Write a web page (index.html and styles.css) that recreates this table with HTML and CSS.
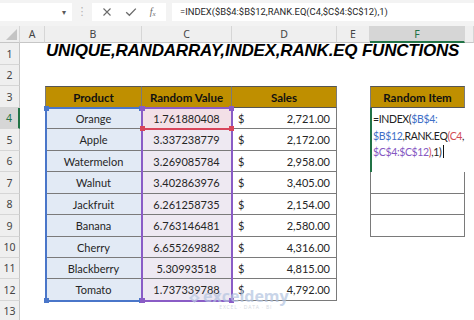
FILE: index.html
```html
<!DOCTYPE html>
<html>
<head>
<meta charset="utf-8">
<link rel="stylesheet" href="styles.css">
</head>
<body>
<div class="app">
  <div class="fbar">
    <div class="namebox"><span class="caret">▾</span></div>
    <div class="grip">⋮</div>
    <div class="fbtns">
      <svg class="ico" viewBox="0 0 10 10" width="10" height="10"><path d="M1.5 1.5 L8.5 8.5 M8.5 1.5 L1.5 8.5" stroke="#6b6b6b" stroke-width="1.1" fill="none"/></svg>
      <svg class="ico" viewBox="0 0 12 10" width="12" height="10"><path d="M1.2 5.2 L4.4 8.3 L10.8 1.6" stroke="#6b6b6b" stroke-width="1.3" fill="none"/></svg>
      <span class="fx">f<sub>x</sub></span>
    </div>
    <div class="finput">=INDEX($B$4:$B$12,RANK.EQ(C4,$C$4:$C$12),1)</div>
  </div>

  <div class="sheet">
    <!-- column headers -->
    <div class="corner"><span class="tri"></span></div>
    <div class="ch">A</div>
    <div class="ch">B</div>
    <div class="ch">C</div>
    <div class="ch">D</div>
    <div class="ch">E</div>
    <div class="ch sel">F</div>
    <div class="ch"></div>

    <!-- row 1 -->
    <div class="rh">1</div>
    <div class="c"></div>
    <div class="title">UNIQUE,RANDARRAY,INDEX,RANK.EQ FUNCTIONS</div>
    <div class="c"></div>

    <!-- row 2 -->
    <div class="rh">2</div>
    <div class="c"></div><div class="c"></div><div class="c"></div><div class="c"></div><div class="c"></div><div class="c"></div><div class="c"></div>

    <!-- row 3 -->
    <div class="rh">3</div>
    <div class="c"></div>
    <div class="t th first">Product</div>
    <div class="t th">Random Value</div>
    <div class="t th">Sales</div>
    <div class="c"></div>
    <div class="t th first">Random Item</div>
    <div class="c"></div>

    <!-- row 4 -->
    <div class="rh sel">4</div>
    <div class="c"></div>
    <div class="t first prod">Orange</div>
    <div class="t rv pink">1.761880408</div>
    <div class="t sales"><span>$</span><span>2,721.00</span></div>
    <div class="c"></div>
    <div class="edit">=INDEX(<span class="cb">$B$4:</span><br><span class="cb">$B$12</span>,RANK.EQ<span class="cr">(C4</span>,<br><span class="cp">$C$4:$C$12</span><span class="cr">)</span>,1)<span class="caretbar"></span></div>
    <div class="c"></div>

    <!-- row 5 -->
    <div class="rh">5</div>
    <div class="c"></div>
    <div class="t first prod">Apple</div>
    <div class="t rv">3.337238779</div>
    <div class="t sales"><span>$</span><span>2,172.00</span></div>
    <div class="c"></div>
    <div class="c"></div>

    <!-- row 6 -->
    <div class="rh">6</div>
    <div class="c"></div>
    <div class="t first prod">Watermelon</div>
    <div class="t rv">3.269085784</div>
    <div class="t sales"><span>$</span><span>2,958.00</span></div>
    <div class="c"></div>
    <div class="c"></div>

    <!-- row 7 -->
    <div class="rh">7</div>
    <div class="c"></div>
    <div class="t first prod">Walnut</div>
    <div class="t rv">3.402863976</div>
    <div class="t sales"><span>$</span><span>3,405.00</span></div>
    <div class="c"></div>
    <div class="t first"></div>
    <div class="c"></div>

    <!-- row 8 -->
    <div class="rh">8</div>
    <div class="c"></div>
    <div class="t first prod">Jackfruit</div>
    <div class="t rv">6.261258735</div>
    <div class="t sales"><span>$</span><span>2,154.00</span></div>
    <div class="c"></div>
    <div class="t first"></div>
    <div class="c"></div>

    <!-- row 9 -->
    <div class="rh">9</div>
    <div class="c"></div>
    <div class="t first prod">Banana</div>
    <div class="t rv">6.763146481</div>
    <div class="t sales"><span>$</span><span>2,580.00</span></div>
    <div class="c"></div>
    <div class="t first"></div>
    <div class="c"></div>

    <!-- row 10 -->
    <div class="rh">10</div>
    <div class="c"></div>
    <div class="t first prod">Cherry</div>
    <div class="t rv">6.655269882</div>
    <div class="t sales"><span>$</span><span>4,316.00</span></div>
    <div class="c"></div><div class="c"></div><div class="c"></div>

    <!-- row 11 -->
    <div class="rh">11</div>
    <div class="c"></div>
    <div class="t first prod">Blackberry</div>
    <div class="t rv">5.30993518</div>
    <div class="t sales"><span>$</span><span>4,815.00</span></div>
    <div class="c"></div><div class="c"></div><div class="c"></div>

    <!-- row 12 -->
    <div class="rh">12</div>
    <div class="c"></div>
    <div class="t first prod">Tomato</div>
    <div class="t rv">1.737339788</div>
    <div class="t sales"><span>$</span><span>4,792.00</span></div>
    <div class="c"></div><div class="c"></div><div class="c"></div>

    <!-- row 13 -->
    <div class="rh">13</div>
    <div class="c"></div><div class="c"></div><div class="c"></div><div class="c"></div><div class="c"></div><div class="c"></div><div class="c"></div>

    <!-- reference range highlights (overlays on grid areas) -->
    <div class="range rng-blue"><i class="hd tl"></i><i class="hd tr"></i><i class="hd bl"></i><i class="hd br"></i></div>
    <div class="range rng-purple"><i class="hd tl"></i><i class="hd tr"></i><i class="hd bl"></i><i class="hd br"></i></div>
    <div class="range rng-red"><i class="hd bl"></i><i class="hd br"></i></div>
  </div>

  <div class="watermark">
    <svg width="13" height="12" viewBox="0 0 13 12"><path d="M1 6 L6.5 1 L12 6 L6.5 11 Z" fill="#b9c9e3"/><path d="M4 6 L6.5 3.7 L9 6 L6.5 8.3 Z" fill="#e7eef8"/></svg>
    <div class="wm-text">
      <span class="wm-name">exceldemy</span>
      <span class="wm-sub">EXCEL · DATA · BI</span>
    </div>
  </div>
</div>
</body>
</html>
```

FILE: styles.css
```css
* { box-sizing: border-box; margin: 0; padding: 0; }
html, body { width: 474px; height: 320px; overflow: hidden; background: #fff; }
body { font-family: Lato, "Liberation Sans", sans-serif; color: #1f1f1f; }

.app { position: relative; width: 474px; height: 320px; overflow: hidden; background: #fff; }

/* formula bar */
.fbar { height: 26px; background: #f3f3f3; display: flex; align-items: flex-start; padding-top: 3px; }
.namebox { width: 72px; height: 18px; background: #fff; display: flex; justify-content: flex-end; align-items: center; padding-right: 6px; }
.caret { font-size: 8px; color: #5a5a5a; line-height: 1; }
.grip { width: 20px; height: 18px; text-align: center; color: #b0b0b0; font: 11px "DejaVu Sans", sans-serif; line-height: 18px; }
.fbtns { width: 74px; height: 18px; background: #fff; display: flex; align-items: center; justify-content: space-around; padding: 0 4px; }
.fx { font: italic 10px "Liberation Serif", serif; color: #6b6b6b; }
.fx sub { font-size: 7px; vertical-align: -1px; }
.finput { flex: 1; height: 18px; background: #fff; margin-left: 6px; padding-left: 8px; font: 9.4px Roboto, sans-serif; line-height: 18px; color: #262626; white-space: nowrap; }

/* sheet grid */
.sheet {
  position: relative;
  display: grid;
  grid-template-columns: 20px 25px 97px 90px 105px 33px 95px 9px;
  grid-template-rows: 17px 22px 21px 22px 21px 22px 21px 22px 21px 22px 21px 21px 22px 21px;
}

.corner, .ch { background: #efefef; border-right: 1px solid #d6d6d6; border-bottom: 1px solid #c6c6c6; }
.corner { position: relative; }
.tri { position: absolute; right: 2px; bottom: 2px; width: 0; height: 0; border-left: 11px solid transparent; border-bottom: 11px solid #c4c4c4; }
.ch { display: flex; align-items: center; justify-content: center; font: 10.5px "Noto Sans", sans-serif; color: #444; }
.ch.sel { background: #d6d6d6; color: #217346; border-bottom: 2px solid #217346; }

.rh { background: #efefef; border-right: 1px solid #c6c6c6; border-bottom: 1px solid #d6d6d6; display: flex; align-items: center; justify-content: center; font: 10.5px "Noto Sans", sans-serif; color: #444; }
.rh.sel { background: #d6d6d6; color: #217346; border-right: 2px solid #217346; }

.c { background: #fff; }

.title { grid-column: 3 / span 5; display: flex; align-items: flex-end; padding: 0 0 4px 1px; font: italic 700 17px "Liberation Sans", sans-serif; letter-spacing: -0.2px; color: #000; white-space: nowrap; }

/* table */
.t { border-right: 1px solid #7a7a7a; border-bottom: 1px solid #7a7a7a; display: flex; align-items: center; justify-content: center; font-size: 11px; color: #262626; }
.t.first { border-left: 1px solid #7a7a7a; }
.th { background: #bf8f00; font-weight: 700; font-size: 11.5px; color: #111; border-top: 1px solid #555; border-bottom-color: #555; }
.prod { background: #e2eaf5; }
.rv { background: #eee9f2; }
.rv.pink { background: #f3e0e7; }
.sales { justify-content: space-between; padding: 0 6px 0 6px; }

/* in-cell edit (F4) */
.edit { grid-column: 7; grid-row: 5 / span 3; position: relative; z-index: 2; background: #fff; border-left: 2px solid #217346; padding: 3px 0 0 1px; font-size: 10.5px; letter-spacing: -0.35px; line-height: 16.5px; color: #222; white-space: nowrap; overflow: hidden; }
.cb { color: #3f6fc7; }
.cr { color: #d24b55; }
.cp { color: #8557c2; }
.caretbar { display: inline-block; width: 1px; height: 13px; background: #111; vertical-align: -2px; margin-left: 1px; }

/* range highlights: absolutely positioned on their grid areas, drawn over the cells */
.range { position: absolute; top: -1px; left: 0; right: -1px; bottom: -1px; z-index: 3; pointer-events: none; }
.rng-blue { grid-column: 3 / 4; grid-row: 5 / 14; border: 2px solid #4a76c9; }
.rng-purple { grid-column: 4 / 5; grid-row: 5 / 14; border: 2px solid #8a5cc6; left: -1px; }
.rng-red { grid-column: 4 / 5; grid-row: 5 / 6; border: 2px solid transparent; border-bottom-color: #d8445a; left: -1px; }
.hd { position: absolute; width: 5px; height: 5px; }
.rng-blue .hd { background: #4a76c9; }
.rng-purple .hd { background: #8a5cc6; }
.rng-red .hd { background: #d8445a; }
.hd.tl { left: -3px; top: -3px; }
.hd.tr { right: -3px; top: -3px; }
.hd.bl { left: -3px; bottom: -3px; }
.hd.br { right: -3px; bottom: -3px; }

/* watermark */
.watermark { position: absolute; left: 188px; top: 289px; display: flex; align-items: flex-start; gap: 2px; opacity: 0.7; pointer-events: none; z-index: 5; }
.watermark svg { margin-top: 3px; }
.wm-text { display: flex; flex-direction: column; align-items: center; }
.wm-name { font: 700 16px "Open Sans", sans-serif; color: #b3c4e0; line-height: 15px; letter-spacing: 0; }
.wm-sub { font: 5px "Open Sans", sans-serif; color: #c3cbd6; letter-spacing: 0.8px; line-height: 7px; }
```
